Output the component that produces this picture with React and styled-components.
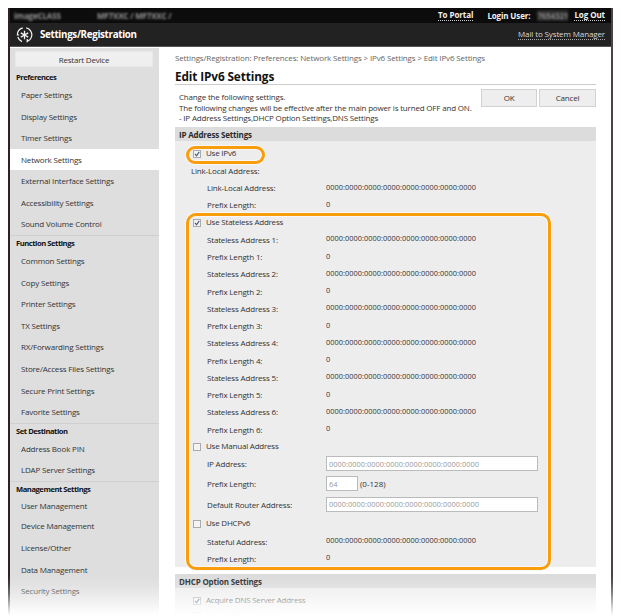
import React from "react";
import styled, { createGlobalStyle } from "styled-components";

const GlobalStyle = createGlobalStyle`
  * {
    box-sizing: border-box;
  }
  body {
    margin: 0;
    background: #fff;
    font-family: "Open Sans", "Noto Sans", sans-serif;
    font-size: 8px;
    letter-spacing: -0.17px;
    color: #333;
  }
`;

const Page = styled.div`
  height: 616px;
  padding: 8px 8px 0 8px;
  overflow: hidden;
  position: relative;
`;

const Window = styled.div`
  display: flex;
  flex-direction: column;
  height: 608px;
  border-left: 2px solid #2b2223;
  border-right: 2px solid #4c4343;
`;

const TopBar = styled.div`
  display: flex;
  align-items: center;
  height: 15px;
  padding: 0 6px 0 4px;
  background: #0c0c0c;
  color: #f2f2f2;
  font-weight: 700;
  white-space: nowrap;
`;

const Masked = styled.span`
  filter: blur(1.3px);
  width: ${(props) => props.$width}px;
  margin-right: ${(props) => props.$gap || 0}px;
  color: ${(props) => props.$color || "#999"};
  background: ${(props) => props.$background || "transparent"};
  overflow: hidden;
`;

const Spacer = styled.div`
  flex: 1;
`;

const TopLink = styled.a`
  color: inherit;
  line-height: 10px;
  border-bottom: 1px dotted #ccc;
  letter-spacing: -0.08px;
`;

const LoginUser = styled.span`
  margin: 0 7px 0 14px;
  letter-spacing: -0.13px;
`;

const Header = styled.div`
  display: flex;
  align-items: center;
  height: 24px;
  padding: 0 6px;
  background: #222;
  color: #fff;
  border-bottom: 1px solid #555;
`;

const HeaderTitle = styled.div`
  flex: 1;
  margin-left: 7px;
  font-size: 9.8px;
  font-weight: 700;
  letter-spacing: -0.33px;
`;

const MailLink = styled.a`
  line-height: 10px;
  color: #d8d8d8;
  border-bottom: 1px dotted #aaa;
  letter-spacing: -0.12px;
`;

const Columns = styled.div`
  display: flex;
  flex: 1;
  min-height: 0;
  padding-top: 1px;
`;

const Sidebar = styled.nav`
  width: 149px;
  background: #dedede;
`;

const Restart = styled.button`
  display: block;
  width: 138px;
  height: 16px;
  margin: 3px 0 2px 5px;
  padding: 0;
  border: 1px solid #e8e8e8;
  background: #efefef;
  font: inherit;
  letter-spacing: -0.2px;
  color: #333;
`;

const Group = styled.div`
  border-top: 1px solid ${(props) => (props.$first ? "transparent" : "#d0d0d0")};
`;

const GroupTitle = styled.div`
  height: 14px;
  padding-left: 6px;
  line-height: 15px;
  font-size: 7.6px;
  font-weight: 700;
  letter-spacing: -0.45px;
  color: #111;
`;

const Item = styled.div`
  height: ${(props) => props.$height || 21.58}px;
  padding-left: 11px;
  line-height: ${(props) => (props.$height || 21.58) - 0.4}px;
  letter-spacing: -0.18px;
  background: ${(props) => (props.$active ? "#fff" : "transparent")};
`;

const Main = styled.main`
  width: 421px;
  margin-left: 16px;
`;

const Breadcrumb = styled.div`
  height: 20px;
  line-height: 20px;
  letter-spacing: -0.14px;
  color: #666;
  white-space: nowrap;
`;

const PageTitle = styled.h1`
  height: 17px;
  margin: 0;
  line-height: 17px;
  font-size: 11.8px;
  letter-spacing: -0.12px;
  color: #111;
  border-bottom: 1px solid #ccc;
`;

const Intro = styled.div`
  display: flex;
  height: 42px;
  padding: 4px 0 0 4px;
`;

const Message = styled.div`
  flex: 1;
  padding-top: 3px;
  line-height: 10.6px;
  letter-spacing: -0.18px;
  white-space: nowrap;
`;

const Button = styled.button`
  width: ${(props) => props.$width}px;
  height: 18px;
  margin-left: 2px;
  padding: 0 0 2px;
  border: 1px solid #d2d2d2;
  background: #eee;
  font: inherit;
  letter-spacing: -0.2px;
  color: #333;
`;

const SectionTitle = styled.div`
  height: 14px;
  padding-left: 4px;
  line-height: 15px;
  font-weight: 700;
  letter-spacing: -0.17px;
  color: #2a2a2a;
  background: #dcdcdc;
`;

const Panel = styled.div`
  height: ${(props) => props.$height}px;
  margin-bottom: 7px;
  padding-top: ${(props) => props.$top}px;
  background: #ededed;
`;

const Row = styled.div`
  display: flex;
  align-items: center;
  height: ${(props) => props.$height || 17.25}px;
  padding-left: ${(props) => props.$indent}px;
  white-space: nowrap;
`;

const Label = styled.div`
  width: 119px;
`;

const Value = styled.div`
  padding-bottom: 2px;
  font-size: 7.4px;
  letter-spacing: 0.03px;
`;

const Field = styled.input`
  width: ${(props) => props.$width}px;
  height: 15px;
  padding: 0 2px;
  border: 1px solid #bbb;
  background: #fff;
  font: inherit;
  font-size: 7.4px;
  letter-spacing: 0.03px;
  color: #999;
`;

const Hint = styled.span`
  margin-left: 2px;
  letter-spacing: 0;
`;

const Box = styled.span`
  display: flex;
  width: 8px;
  height: 8px;
  margin: 1px 5px 0 0;
  border: 1px solid #aaa;
  background: #f4f4f4;
`;

const CheckLabel = styled.span`
  padding-bottom: 1px;
  letter-spacing: -0.22px;
`;

// highlight frame drawn over the form
const Callout = styled.div`
  position: absolute;
  left: 186px;
  top: ${(props) => props.$top}px;
  width: ${(props) => props.$width}px;
  height: ${(props) => props.$height}px;
  border: 3px solid #f99d0c;
  border-radius: ${(props) => props.$radius}px;
  box-shadow: 0 0 0 1px #f8f8f8, inset 0 0 0 1px #f8f8f8;
  pointer-events: none;
`;

const Fade = styled.div`
  position: absolute;
  left: 0;
  right: 0;
  bottom: 0;
  height: 40px;
  background: linear-gradient(
    rgba(255, 255, 255, 0),
    rgba(255, 255, 255, 0.12) 20%,
    rgba(255, 255, 255, 0.35) 45%,
    rgba(255, 255, 255, 0.6) 65%,
    rgba(255, 255, 255, 0.9) 90%,
    #fff
  );
`;

const groups = [
  {
    title: "Preferences",
    items: [
      "Paper Settings",
      "Display Settings",
      "Timer Settings",
      "Network Settings",
      "External Interface Settings",
      "Accessibility Settings",
      "Sound Volume Control",
    ],
  },
  {
    title: "Function Settings",
    items: [
      "Common Settings",
      "Copy Settings",
      "Printer Settings",
      "TX Settings",
      "RX/Forwarding Settings",
      "Store/Access Files Settings",
      "Secure Print Settings",
      "Favorite Settings",
    ],
  },
  {
    title: "Set Destination",
    items: ["Address Book PIN", "LDAP Server Settings"],
  },
  {
    title: "Management Settings",
    items: [
      "User Management",
      "Device Management",
      "License/Other",
      "Data Management",
      "Security Settings",
    ],
  },
];

const address = "0000:0000:0000:0000:0000:0000:0000:0000";

const Logo = () => (
  <svg width="17" height="16" viewBox="0 0 17 16" fill="none" stroke="#f2f2f2">
    <path
      d="M6.8 .9A7.3 7.2 0 0 0 1.4 8H3.2M1.8 10A7.3 7.2 0 0 0 6 14.6M10.2 .9A7.3 7.2 0 0 1 14.2 12.4L11.2 14.6V12"
      strokeWidth="1.2"
    />
    <path d="M8.5 3.8v8.4M4.8 5.9l7.4 4.2M12.2 5.9l-7.4 4.2" strokeWidth="1.3" />
  </svg>
);

const CheckRow = ({ checked, label, height }) => (
  <Row $indent={18} $height={height}>
    <Box>
      {checked && (
        <svg width="6" height="6" viewBox="0 0 6 6" fill="none">
          <path d="M1 2.8l1.6 2L5.2 .8" stroke="#45607f" strokeWidth="1.2" />
        </svg>
      )}
    </Box>
    <CheckLabel>{label}</CheckLabel>
  </Row>
);

const DataRow = ({ label, value, height }) => (
  <Row $indent={32} $height={height}>
    <Label>{label}</Label>
    <Value>{value}</Value>
  </Row>
);

export default function App() {
  return (
    <Page>
      <GlobalStyle />
      <Window>
        <TopBar>
          <Masked $width={49} $gap={34}>
            imageCLASS
          </Masked>
          <Masked $width={78}>MF7XXC / MF7XXC /</Masked>
          <Spacer />
          <TopLink>To Portal</TopLink>
          <LoginUser>Login User:</LoginUser>
          <Masked $width={31} $gap={6} $color="#888" $background="#2a2a2a">
            7654321
          </Masked>
          <TopLink>Log Out</TopLink>
        </TopBar>
        <Header>
          <Logo />
          <HeaderTitle>Settings/Registration</HeaderTitle>
          <MailLink>Mail to System Manager</MailLink>
        </Header>
        <Columns>
          <Sidebar>
            <Restart>Restart Device</Restart>
            {groups.map((group, i) => (
              <Group key={group.title} $first={i === 0}>
                <GroupTitle>{group.title}</GroupTitle>
                {group.items.map((item) => (
                  <Item
                    key={item}
                    $active={item === "Network Settings"}
                    $height={item === "User Management" ? 19.6 : undefined}
                  >
                    {item}
                  </Item>
                ))}
              </Group>
            ))}
          </Sidebar>
          <Main>
            <Breadcrumb>
              Settings/Registration: Preferences: Network Settings &gt; IPv6
              Settings &gt; Edit IPv6 Settings
            </Breadcrumb>
            <PageTitle>Edit IPv6 Settings</PageTitle>
            <Intro>
              <Message>
                Change the following settings.
                <br />
                The following changes will be effective after the main power is
                turned OFF and ON.
                <br />- IP Address Settings,DHCP Option Settings,DNS Settings
              </Message>
              <Button $width={56}>OK</Button>
              <Button $width={57}>Cancel</Button>
            </Intro>
            <SectionTitle>IP Address Settings</SectionTitle>
            <Panel $height={426} $top={3.4}>
              <CheckRow checked label="Use IPv6" />
              <Row $indent={16}>Link-Local Address:</Row>
              <DataRow label="Link-Local Address:" value={address} />
              <DataRow label="Prefix Length:" value="0" />
              <CheckRow checked label="Use Stateless Address" />
              {[1, 2, 3, 4, 5, 6].map((n) => (
                <React.Fragment key={n}>
                  <DataRow label={`Stateless Address ${n}:`} value={address} />
                  <DataRow label={`Prefix Length ${n}:`} value="0" />
                </React.Fragment>
              ))}
              <CheckRow label="Use Manual Address" />
              <Row $indent={32}>
                <Label>IP Address:</Label>
                <Field $width={212} defaultValue={address} />
              </Row>
              <Row $indent={32} $height={23}>
                <Label>Prefix Length:</Label>
                <Field $width={32} defaultValue="64" />
                <Hint>(0-128)</Hint>
              </Row>
              <Row $indent={32} $height={18.4}>
                <Label>Default Router Address:</Label>
                <Field $width={212} defaultValue={address} />
              </Row>
              <CheckRow label="Use DHCPv6" height={19} />
              <DataRow label="Stateful Address:" value={address} />
              <DataRow label="Prefix Length:" value="0" />
            </Panel>
            <SectionTitle>DHCP Option Settings</SectionTitle>
            <Panel $height={40} $top={4}>
              <CheckRow checked label="Acquire DNS Server Address" height={16} />
              <CheckRow label="Acquire Domain Name" height={15} />
            </Panel>
          </Main>
        </Columns>
      </Window>
      <Callout $top={146} $width={79} $height={18} $radius={9} />
      <Callout $top={213} $width={365} $height={357} $radius={10} />
      <Fade />
    </Page>
  );
}
